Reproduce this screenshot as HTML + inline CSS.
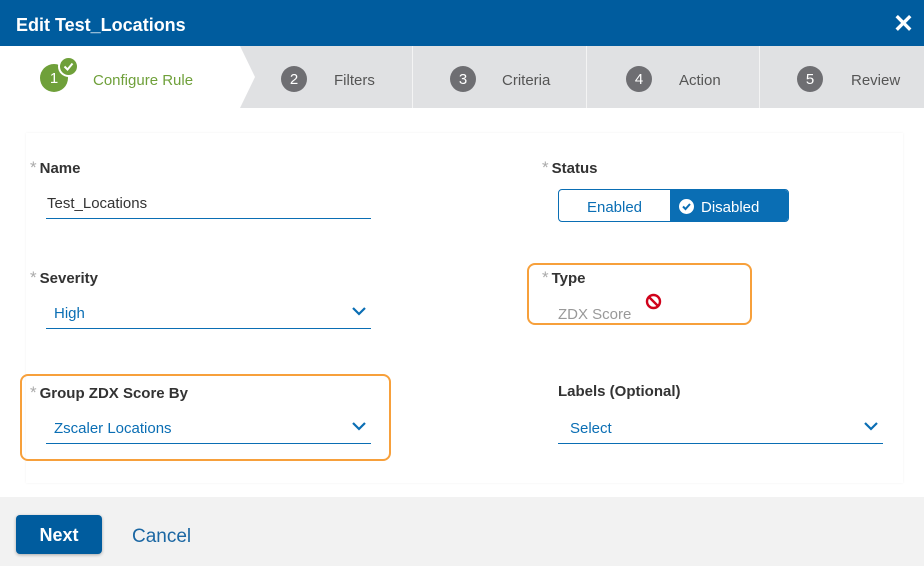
<!DOCTYPE html>
<html><head><style>
*{margin:0;padding:0;box-sizing:border-box}
body{width:924px;height:566px;overflow:hidden;font-family:"Liberation Sans",sans-serif;background:#fff;position:relative}
.hdr{position:absolute;left:0;top:0;width:924px;height:46px;background:#005c9e;color:#fff;font-weight:bold;font-size:18px;padding:15px 0 0 16px}
.x{position:absolute;right:10px;top:9px;font-size:25px;font-weight:bold;color:#fff}
.tabs{position:absolute;top:46px;left:0;width:924px;height:62px;background:#e0e1e3}
.t1{position:absolute;left:0;top:0;width:255px;height:62px;background:#fff;clip-path:polygon(0 0,240px 0,255px 31px,240px 62px,0 62px)}
.sep{position:absolute;top:0;width:1px;height:62px;background:#f4f4f4}
.num{position:absolute;top:20px;width:26px;height:26px;border-radius:50%;background:#6e6e72;color:#fff;font-size:15px;text-align:center;line-height:27px}
.tl{position:absolute;top:26px;font-size:15px;color:#555}
.lbl{position:absolute;font-size:15px;font-weight:bold;color:#333}
.lbl i{font-style:normal;color:#aaa;font-weight:normal;margin-right:3px;font-size:17px}
.inp{position:absolute;border-bottom:1px solid #0a6eb4;font-size:15px;height:31px;padding:7px 0 0 1px}
.chev{position:absolute;right:4px;top:8px}
.box{position:absolute;border:2px solid #f7a03b;border-radius:8px}
.foot{position:absolute;left:0;top:497px;width:924px;height:69px;background:#f2f2f2}
</style></head><body>
<div class="hdr">Edit Test_Locations</div><div class="x">✕</div>
<div class="tabs">
<div class="t1"></div>
<div style="position:absolute;left:40px;top:18px;width:28px;height:28px;border-radius:50%;background:#6fa03a;color:#fff;font-size:15px;text-align:center;line-height:30px">1</div>
<div style="position:absolute;left:58px;top:10px;width:21px;height:21px;border-radius:50%;background:#6fa03a;border:2px solid #fff"><svg width="17" height="17" viewBox="0 0 17 17"><path d="M4.5 8.5l3 3 5-6" stroke="#fff" stroke-width="2" fill="none"/></svg></div>
<div class="tl" style="left:93px;color:#6fa03a">Configure Rule</div>
<div class="num" style="left:281px">2</div><div class="tl" style="left:334px">Filters</div>
<div class="sep" style="left:412px"></div>
<div class="num" style="left:450px">3</div><div class="tl" style="left:502px">Criteria</div>
<div class="sep" style="left:586px"></div>
<div class="num" style="left:626px">4</div><div class="tl" style="left:679px">Action</div>
<div class="sep" style="left:759px"></div>
<div class="num" style="left:797px">5</div><div class="tl" style="left:851px">Review</div>
</div>
<div style="position:absolute;left:26px;top:133px;width:877px;height:350px;background:#fff;box-shadow:0 0 2px rgba(0,0,0,.06)"></div>
<div class="lbl" style="left:30px;top:158px"><i>*</i>Name</div>
<div class="inp" style="left:46px;top:188px;width:325px;color:#333">Test_Locations</div>
<div class="lbl" style="left:542px;top:158px"><i>*</i>Status</div>
<div style="position:absolute;left:558px;top:189px;width:231px;height:33px;border:1px solid #0a6eb4;border-radius:4px;overflow:hidden;font-size:15px">
<div style="position:absolute;left:0;top:0;width:111px;height:33px;color:#0a6eb4;text-align:center;line-height:35px">Enabled</div>
<div style="position:absolute;left:111px;top:0;width:120px;height:33px;background:#0a6eb4;color:#fff;line-height:35px;padding-left:31px">Disabled</div>
<div style="position:absolute;left:120px;top:9px;width:15px;height:15px;border-radius:50%;background:#fff"><svg width="15" height="15"><path d="M4 7.5l2.5 2.5 4.5-5" stroke="#0a6eb4" stroke-width="2" fill="none"/></svg></div>
</div>
<div class="lbl" style="left:30px;top:268px"><i>*</i>Severity</div>
<div class="inp" style="left:46px;top:298px;width:325px;color:#0a6eb4;padding-left:8px">High<svg class="chev" width="16" height="10"><path d="M2 2l6 6 6-6" stroke="#0a6eb4" stroke-width="2.2" fill="none"/></svg></div>
<div class="box" style="left:527px;top:263px;width:225px;height:62px"></div>
<div class="lbl" style="left:542px;top:268px"><i>*</i>Type</div>
<div style="position:absolute;left:558px;top:306px;font-size:15px;color:#999">ZDX Score</div>
<svg style="position:absolute;left:645px;top:293px" width="17" height="17"><circle cx="8.5" cy="8.5" r="6.5" stroke="#d0021b" stroke-width="2.4" fill="none"/><path d="M4 4l9 9" stroke="#d0021b" stroke-width="2.4"/></svg>
<div class="box" style="left:20px;top:374px;width:371px;height:87px"></div>
<div class="lbl" style="left:30px;top:383px"><i>*</i>Group ZDX Score By</div>
<div class="inp" style="left:46px;top:413px;width:325px;color:#0a6eb4;padding-left:8px">Zscaler Locations<svg class="chev" width="16" height="10"><path d="M2 2l6 6 6-6" stroke="#0a6eb4" stroke-width="2.2" fill="none"/></svg></div>
<div class="lbl" style="left:558px;top:383px">Labels (Optional)</div>
<div class="inp" style="left:558px;top:413px;width:325px;color:#0a6eb4;padding-left:12px">Select<svg class="chev" width="16" height="10"><path d="M2 2l6 6 6-6" stroke="#0a6eb4" stroke-width="2.2" fill="none"/></svg></div>
<div class="foot">
<div style="position:absolute;left:16px;top:18px;width:86px;height:39px;background:#005c9e;border-radius:4px;color:#fff;font-weight:bold;font-size:18px;text-align:center;line-height:41px;box-shadow:0 1px 3px rgba(0,0,0,.3)">Next</div>
<div style="position:absolute;left:132px;top:29px;font-size:19px;color:#1b67a3">Cancel</div>
</div>
</body></html>
